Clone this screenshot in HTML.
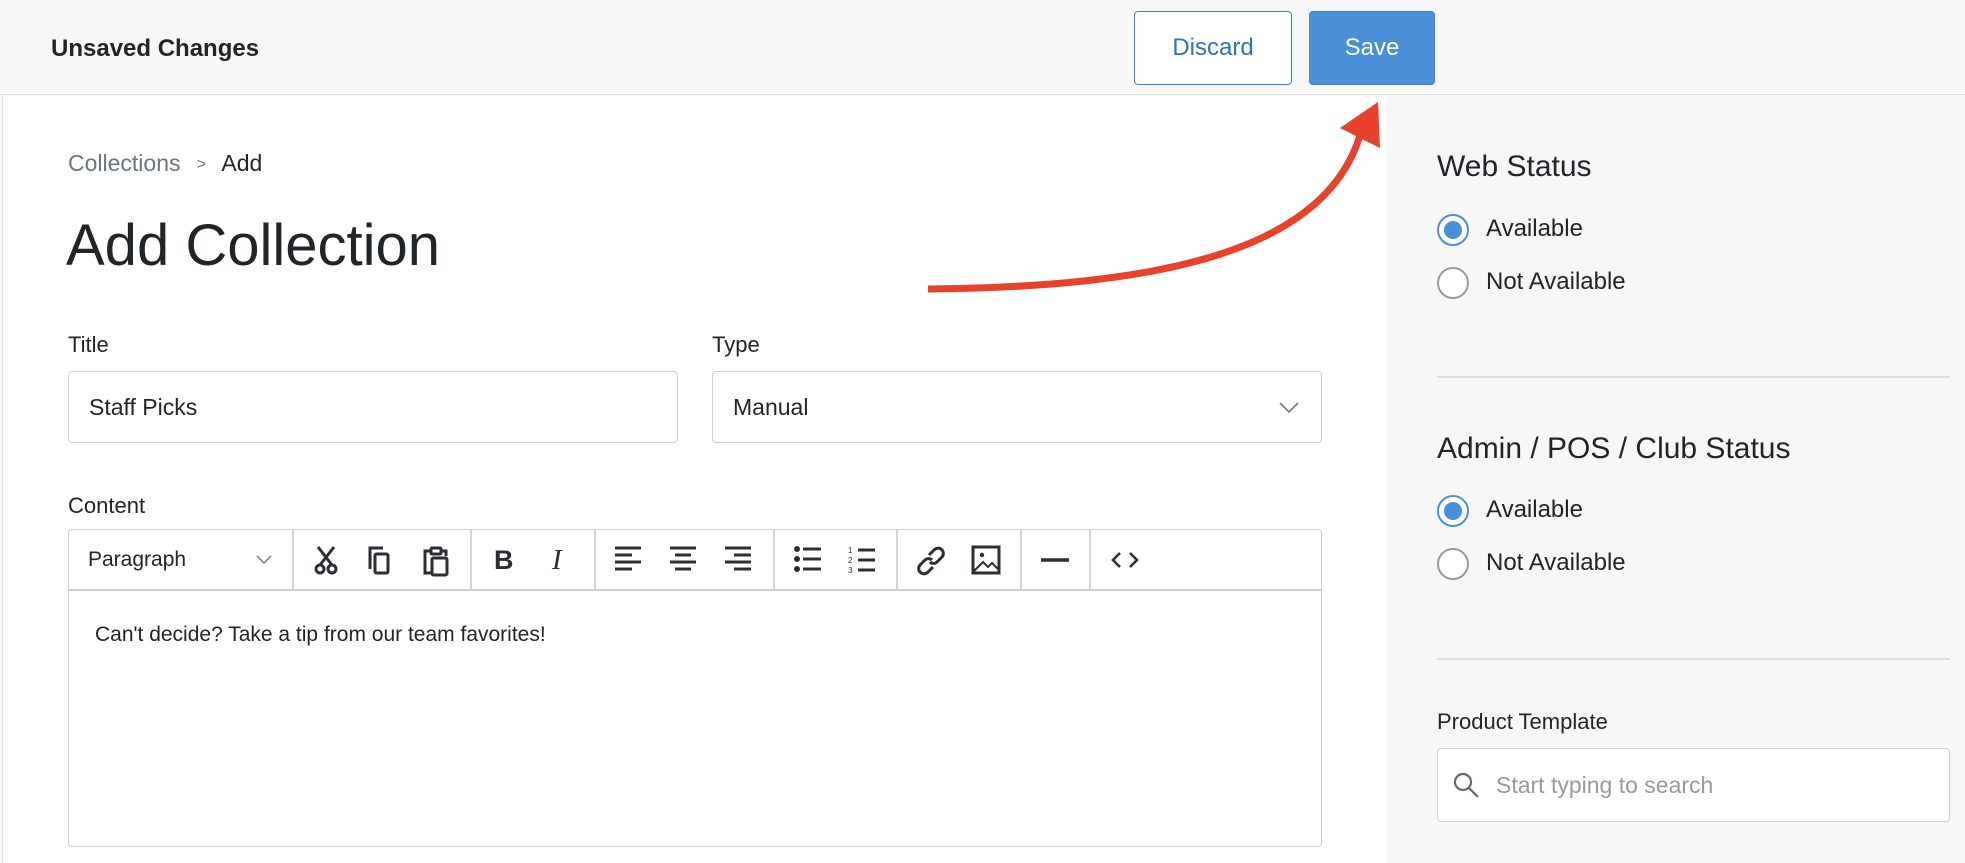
<!DOCTYPE html>
<html><head><meta charset="utf-8"><style>
*{box-sizing:border-box;margin:0;padding:0}
body{width:1965px;height:863px;overflow:hidden;background:#f7f7f7;font-family:"Liberation Sans",sans-serif;color:#212529;position:relative}
.a{position:absolute}
.top{left:0;top:0;width:1965px;height:95px;background:#f7f7f7;border-bottom:1.5px solid #dedede}
.btn{position:absolute;top:11px;height:74px;border-radius:4px;font-size:24px;display:flex;align-items:center;justify-content:center}
.main{left:2px;top:96px;width:1385px;height:767px;background:#fff;border-left:1px solid #e3e3e3}
.lbl{font-size:22px;color:#212529}
.inp{position:absolute;height:72px;border:1.5px solid #cfcfcf;border-radius:4px;background:#fff;font-size:23px;padding-left:20px;display:flex;align-items:center}
.radio{position:absolute;left:1437px;width:32px;height:32px;border-radius:50%;border:2px solid #9a9a9a;background:#fff}
.radio.on{border-color:#4a90d9}
.radio.on::after{content:"";position:absolute;left:5px;top:5px;width:18px;height:18px;border-radius:50%;background:#4a90d9}
.rt{position:absolute;left:1486px;font-size:24px;color:#212529}
.h2{position:absolute;left:1437px;font-size:30px;color:#212529}
.sep{position:absolute;top:530px;width:1.5px;height:60px;background:#d4d4d4}
.ic{position:absolute;top:545px}
</style></head><body>
<div class="a top"></div>
<div class="a" style="left:51px;top:35px;font-size:24px;font-weight:bold;color:#212529">Unsaved Changes</div>
<div class="btn" style="left:1134px;width:158px;border:1.5px solid #3d7fc4;background:#fff;color:#2f72b8">Discard</div>
<div class="btn" style="left:1309px;width:126px;background:#4a90d9;color:#fff;border:1px solid #3d80c8">Save</div>

<div class="a main"></div>
<div class="a" style="left:68px;top:150px;font-size:23px;color:#6c757d">Collections <span style="font-size:16px;margin:0 10px;position:relative;top:-2px">&gt;</span> <span style="color:#212529">Add</span></div>
<div class="a" style="left:66px;top:212px;font-size:58px;color:#212529">Add Collection</div>

<div class="a lbl" style="left:68px;top:332px">Title</div>
<div class="a lbl" style="left:712px;top:332px">Type</div>
<div class="inp" style="left:68px;top:371px;width:610px">Staff Picks</div>
<div class="inp" style="left:712px;top:371px;width:610px">Manual
<svg class="a" style="right:22px;top:30px" width="20" height="12" viewBox="0 0 20 12"><path d="M1 1 L10 10 L19 1" fill="none" stroke="#777" stroke-width="1.6"/></svg></div>

<div class="a lbl" style="left:68px;top:493px">Content</div>
<div class="a" style="left:68px;top:529px;width:1254px;height:318px;border:1.5px solid #cfcfcf;border-radius:4px;background:#fff"></div>
<div class="a" style="left:69px;top:589px;width:1252px;height:1.5px;background:#cfcfcf"></div>
<div class="a" style="left:88px;top:548px;font-size:21px;color:#212529">Paragraph</div>
<svg class="a" style="left:256px;top:555px" width="16" height="10" viewBox="0 0 16 10"><path d="M1 1 L8 8 L15 1" fill="none" stroke="#888" stroke-width="1.6"/></svg>
<div class="sep" style="left:292px"></div><div class="sep" style="left:470px"></div><div class="sep" style="left:594px"></div><div class="sep" style="left:773px"></div><div class="sep" style="left:896px"></div><div class="sep" style="left:1020px"></div><div class="sep" style="left:1089px"></div>
<svg class="ic" style="left:313px" width="26" height="30" viewBox="0 0 26 30" fill="none" stroke="#2b2f33" stroke-width="3"><path d="M5 2 L19 20 M21 2 L7 20"/><circle cx="7" cy="24" r="4"/><circle cx="19" cy="24" r="4"/></svg>
<svg class="ic" style="left:367px" width="26" height="30" viewBox="0 0 26 30" fill="none" stroke="#2b2f33" stroke-width="3"><path d="M3 24 V3 H16"/><rect x="8" y="9" width="13" height="19" rx="1.5"/></svg>
<svg class="ic" style="left:422px" width="28" height="32" viewBox="0 0 28 32" fill="none" stroke="#2b2f33" stroke-width="3"><path d="M8 6 H3 V28 H9"/><path d="M20 6 H24 V11"/><rect x="9" y="3" width="10" height="6" rx="1"/><rect x="10" y="13" width="15" height="17" rx="1.5"/></svg>
<div class="a" style="left:494px;top:545px;font-size:27px;font-weight:bold;color:#2b2f33">B</div>
<div class="a" style="left:552px;top:544px;font-size:29px;font-style:italic;font-family:'Liberation Serif',serif;color:#2b2f33">I</div>
<svg class="ic" style="left:614px" width="28" height="26" viewBox="0 0 28 26" stroke="#2b2f33" stroke-width="3"><path d="M1 3H27M1 10H18M1 17H27M1 24H18"/></svg>
<svg class="ic" style="left:669px" width="28" height="26" viewBox="0 0 28 26" stroke="#2b2f33" stroke-width="3"><path d="M1 3H27M6 10H22M1 17H27M6 24H22"/></svg>
<svg class="ic" style="left:724px" width="28" height="26" viewBox="0 0 28 26" stroke="#2b2f33" stroke-width="3"><path d="M1 3H27M10 10H27M1 17H27M10 24H27"/></svg>
<svg class="ic" style="left:794px" width="28" height="28" viewBox="0 0 28 28" stroke="#2b2f33" stroke-width="3"><path d="M9 4H27M9 14H27M9 24H27"/><circle cx="3" cy="4" r="1.5" fill="#2b2f33"/><circle cx="3" cy="14" r="1.5" fill="#2b2f33"/><circle cx="3" cy="24" r="1.5" fill="#2b2f33"/></svg>
<svg class="ic" style="left:848px" width="28" height="30" viewBox="0 0 28 30" stroke="#2b2f33"><path d="M10 5H27M10 15H27M10 25H27" stroke-width="3"/><text x="0" y="8" font-size="8" fill="#2b2f33" stroke="none" font-family="Liberation Sans">1</text><text x="0" y="18" font-size="8" fill="#2b2f33" stroke="none" font-family="Liberation Sans">2</text><text x="0" y="28" font-size="8" fill="#2b2f33" stroke="none" font-family="Liberation Sans">3</text></svg>
<svg class="ic" style="left:915px" width="32" height="32" viewBox="0 0 32 32" fill="none" stroke="#2b2f33" stroke-width="3"><path d="M14 10 L19 5 A5 5 0 0 1 27 12 L22 17 A5 5 0 0 1 15 17"/><path d="M18 22 L13 27 A5 5 0 0 1 5 20 L10 15 A5 5 0 0 1 17 15"/></svg>
<svg class="ic" style="left:971px" width="30" height="30" viewBox="0 0 30 30" fill="none" stroke="#2b2f33" stroke-width="3"><rect x="2" y="2" width="26" height="26"/><circle cx="11" cy="10" r="2.2" fill="#2b2f33" stroke="none"/><path d="M3 26 L12 17 L17 22 L21 18 L27 24" stroke-width="2"/></svg>
<svg class="ic" style="left:1040px" width="30" height="30" viewBox="0 0 30 30" stroke="#2b2f33" stroke-width="3.5"><path d="M1 15H29"/></svg>
<svg class="ic" style="left:1110px" width="30" height="30" viewBox="0 0 30 30" fill="none" stroke="#2b2f33" stroke-width="2.6"><path d="M10 8 L3 15 L10 22 M20 8 L27 15 L20 22"/></svg>
<div class="a" style="left:95px;top:623px;font-size:21px;color:#212529">Can't decide? Take a tip from our team favorites!</div>

<div class="h2" style="top:150px">Web Status</div>
<div class="radio on" style="top:214px"></div><div class="rt" style="top:215px">Available</div>
<div class="radio" style="top:267px"></div><div class="rt" style="top:268px">Not Available</div>
<div class="a" style="left:1437px;top:376px;width:513px;height:1.5px;background:#dedede"></div>
<div class="h2" style="top:432px">Admin / POS / Club Status</div>
<div class="radio on" style="top:495px"></div><div class="rt" style="top:496px">Available</div>
<div class="radio" style="top:548px"></div><div class="rt" style="top:549px">Not Available</div>
<div class="a" style="left:1437px;top:658px;width:513px;height:1.5px;background:#dedede"></div>
<div class="a lbl" style="left:1437px;top:709px">Product Template</div>
<div class="inp" style="left:1437px;top:748px;width:513px;height:74px;padding-left:58px;color:#9a9a9a">Start typing to search
<svg class="a" style="left:14px;top:22px" width="30" height="30" viewBox="0 0 30 30" fill="none" stroke="#666" stroke-width="2.2"><circle cx="11" cy="11" r="8"/><path d="M17 17 L26 26"/></svg></div>

<svg class="a" style="left:0;top:0" width="1965" height="863" viewBox="0 0 1965 863"><path d="M928 289 C1150 287 1330 255 1362 128" fill="none" stroke="#e8412c" stroke-width="7"/><polygon points="1378,102 1340,128 1380,148" fill="#e8412c"/></svg>
</body></html>
